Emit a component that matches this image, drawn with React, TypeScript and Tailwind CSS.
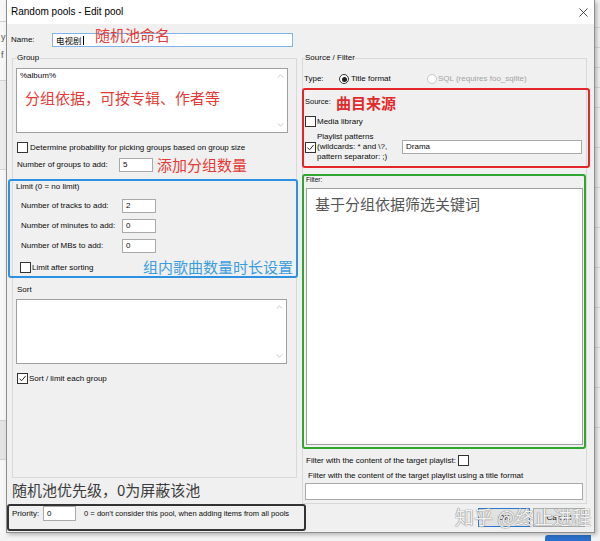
import React from 'react'

// small pieces of the Windows dialog

function Check({ checked = false }: { checked?: boolean }) {
  return (
    <span className="flex h-[11px] w-[11px] shrink-0 items-center justify-center border border-[#333] bg-white">
      {checked && (
        <svg viewBox="0 0 10 10" className="h-[9px] w-[9px]">
          <path d="M1.6 5.1 L4 7.5 L8.5 2.2" fill="none" stroke="#222" strokeWidth="1.1" />
        </svg>
      )}
    </span>
  )
}

function Radio({ on = false, disabled = false }: { on?: boolean; disabled?: boolean }) {
  return (
    <span
      className={
        disabled
          ? 'flex h-[10px] w-[10px] shrink-0 items-center justify-center rounded-full border border-[#c8c8c8] bg-white'
          : 'flex h-[10px] w-[10px] shrink-0 items-center justify-center rounded-full border border-[#333] bg-white'
      }
    >
      {on && <span className="h-[5px] w-[5px] rounded-full bg-[#222]" />}
    </span>
  )
}

function Box({ value = '', className = '' }: { value?: string; className?: string }) {
  return (
    <div className={`flex shrink-0 items-center border border-[#a9a9a9] bg-white px-[3px] ${className}`}>
      {value}
    </div>
  )
}

function Chevron({ up = false }: { up?: boolean }) {
  return (
    <svg viewBox="0 0 8 5" className="h-[4px] w-[7px]">
      <path d={up ? 'M0.5 4.5 L4 1 L7.5 4.5' : 'M0.5 0.5 L4 4 L7.5 0.5'} fill="none" stroke="#bdbdbd" strokeWidth="1" />
    </svg>
  )
}

function Memo({ text = '', className = '' }: { text?: string; className?: string }) {
  return (
    <div className={`flex shrink-0 border border-[#a0a0a0] bg-white ${className}`}>
      <div className="flex-1 px-[3px] pt-[2px]">{text}</div>
      <div className="flex w-[13px] flex-col items-center justify-between py-[5px]">
        <Chevron up />
        <Chevron />
      </div>
    </div>
  )
}

const note = "pointer-events-none absolute whitespace-nowrap font-['Noto_Sans_CJK_SC',sans-serif] text-[15px] leading-[20px]"

function LeftColumn() {
  return (
    <div className="flex w-[295px] flex-col">
      <div className="mt-[9px] flex h-[14px] items-center pl-[4px]">
        <span className="w-[41px]">Name:</span>
        <div className="flex h-[14px] w-[241px] items-center border border-[#7eb4ea] bg-white px-[3px] font-['Noto_Sans_CJK_SC',sans-serif] text-[8.5px]">
          电视剧<span className="ml-[1px] h-[9px] w-px bg-black" />
        </div>
      </div>

      <fieldset className="ml-[5px] mt-[6px] h-[425px] w-[285px] border border-[#d9d9d9]">
        <legend className="ml-[3px] px-[1px] leading-[10px]">Group</legend>
        <Memo text="%album%" className="ml-[3px] mt-[5px] h-[65px] w-[272px]" />

        <div className="ml-[4px] mt-[9px] flex h-[11px] items-center gap-[2px]">
          <Check />
          <span>Determine probability for picking groups based on group size</span>
        </div>

        <div className="ml-[4px] mt-[5px] flex h-[14px] items-center">
          <span className="w-[102px]">Number of groups to add:</span>
          <Box value="5" className="h-[14px] w-[34px]" />
        </div>

        <div className="ml-[3px] mt-[10px] h-[10px]">Limit (0 = no limit)</div>
        {[
          ['Number of tracks to add:', '2', 'mt-[7px]'],
          ['Number of minutes to add:', '0', 'mt-[6px]'],
          ['Number of MBs to add:', '0', 'mt-[6px]'],
        ].map(([label, value, gap]) => (
          <div key={label} className={`ml-[8px] flex h-[14px] items-center ${gap}`}>
            <span className="w-[101px]">{label}</span>
            <Box value={value} className="h-[14px] w-[34px]" />
          </div>
        ))}
        <div className="ml-[7px] mt-[9px] flex h-[11px] items-center gap-[1px]">
          <Check />
          <span>Limit after sorting</span>
        </div>

        <div className="ml-[4px] mt-[12px] h-[10px]">Sort</div>
        <Memo className="ml-[3px] mt-[4px] h-[65px] w-[271px]" />
        <div className="ml-[4px] mt-[9px] flex h-[11px] items-center gap-[1px]">
          <Check checked />
          <span>Sort / limit each group</span>
        </div>
      </fieldset>

      <div className="mt-[28px] flex h-[15px] items-center pl-[5px]">
        <span className="w-[31px]">Priority:</span>
        <Box value="0" className="h-[15px] w-[33px]" />
        <span className="ml-[8px] text-[7.6px]">0 = don't consider this pool, when adding items from all pools</span>
      </div>
    </div>
  )
}

function RightColumn() {
  return (
    <div className="flex w-[292px] flex-col">
      <fieldset className="mt-[29px] w-[285px] border border-[#d9d9d9] pb-[3px]">
        <legend className="ml-[2px] leading-[10px]">Source / Filter</legend>

        <div className="mt-[11px] flex h-[10px] items-center pl-[1px]">
          <span className="w-[35px]">Type:</span>
          <div className="flex w-[88px] items-center gap-[2px]">
            <Radio on />
            <span>Title format</span>
          </div>
          <div className="flex items-center gap-[1px] text-[#a3a3a3]">
            <Radio disabled />
            <span>SQL (requires foo_sqlite)</span>
          </div>
        </div>

        <div className="ml-[2px] mt-[13px] h-[10px] text-[7.5px]">Source:</div>
        <div className="ml-[2px] mt-[9px] flex h-[11px] items-center gap-[1px]">
          <Check />
          <span>Media library</span>
        </div>
        <div className="ml-[2px] mt-[5px] flex h-[30px] items-center">
          <Check checked />
          <span className="w-[86px] pl-[1px] leading-[10px]">
            Playlist patterns
            <br />
            (wildcards: * and \?,
            <br />
            pattern separator: ;)
          </span>
          <Box value="Drama" className="h-[14px] w-[180px]" />
        </div>

        <div className="ml-[3px] mt-[14px] h-[8px] text-[6.5px] leading-[8px]">Filter:</div>
        <div className="ml-[3px] mt-[4px] h-[257px] w-[277px] border border-[#a0a0a0] bg-white" />

        <div className="ml-[3px] mt-[10px] flex h-[11px] items-center gap-[2px]">
          <span>Filter with the content of the target playlist:</span>
          <Check />
        </div>
        <div className="ml-[5px] mt-[5px] h-[10px]">Filter with the content of the target playlist using a title format</div>
        <Box className="ml-[2px] mt-[2px] h-[17px] w-[278px]" />
      </fieldset>

      <div className="mt-[4px] flex justify-end gap-[3px] pr-[9px]">
        <button className="flex h-[19px] w-[52px] items-center justify-center border border-[#2a78d0] bg-[#e1e1e1] text-[8px]">
          OK
        </button>
        <button className="flex h-[19px] w-[52px] items-center justify-center border border-[#adadad] bg-[#e1e1e1] text-[8px]">
          Cancel
        </button>
      </div>
    </div>
  )
}

function Dialog() {
  return (
    <div className="relative flex h-[533px] w-[589px] shrink-0 flex-col border-x border-b border-[#8f8f8f] bg-[#f0f0f0] text-[8px] leading-[10px] text-[#0a0a0a] shadow-[2px_2px_4px_rgba(0,0,0,0.25)]">
      <div className="flex h-[24px] shrink-0 items-center justify-between bg-white pl-[4px] pr-[6px] text-[10px] text-black">
        <span>Random pools - Edit pool</span>
        <svg viewBox="0 0 10 10" className="h-[9px] w-[9px]">
          <path d="M0.5 0.5 L9.5 9.5 M9.5 0.5 L0.5 9.5" stroke="#222" strokeWidth="0.9" />
        </svg>
      </div>

      <div className="flex flex-1">
        <LeftColumn />
        <RightColumn />
      </div>

      {/* hand-drawn annotations on top of the screenshot */}
      <div className="pointer-events-none absolute left-[1px] top-[179px] h-[99px] w-[290px] rounded-[3px] border-2 border-[#2e90e0]" />
      <div className="pointer-events-none absolute left-0 top-[504px] h-[27px] w-[299px] rounded-[3px] border-2 border-[#333]" />
      <div className="pointer-events-none absolute left-[295px] top-[88px] h-[80px] w-[288px] rounded-[3px] border-2 border-[#e3262b]" />
      <div className="pointer-events-none absolute left-[295px] top-[174px] h-[275px] w-[284px] rounded-[3px] border-2 border-[#2fa62f]" />

      <span className={`${note} left-[88px] top-[25px] text-[#e53a35]`}>随机池命名</span>
      <span className={`${note} left-[18px] top-[88px] text-[#e53a35]`}>分组依据，可按专辑、作者等</span>
      <span className={`${note} left-[150px] top-[155px] text-[#e53a35]`}>添加分组数量</span>
      <span className={`${note} left-[136px] top-[257px] text-[#3a9de0]`}>组内歌曲数量时长设置</span>
      <span className={`${note} left-[5px] top-[480px] text-[#3c3c3c]`}>随机池优先级，0为屏蔽该池</span>
      <span className={`${note} left-[329px] top-[93px] font-bold text-[#e02a2a]`}>曲目来源</span>
      <span className={`${note} left-[308px] top-[194px] text-[#555]`}>基于分组依据筛选关键词</span>
      <span className={`${note} left-[448px] top-[507px] text-[19px] text-white/90 [text-shadow:0_0_1px_#777,0_0_1px_#777]`}>
        知乎 @终止进程
      </span>
    </div>
  )
}

function LeftStrip() {
  return (
    <div className="flex w-[6px] shrink-0 flex-col overflow-hidden bg-[#f7f7f7] text-[9px] leading-[10px] text-[#555]">
      <div className="h-[22px] border-b border-[#d0d0d0]" />
      <div className="mt-[10px] pl-[1px]">y</div>
      <div className="mt-[8px] pl-[1px]">f</div>
      <div className="mt-[20px] h-[90px] border-y border-[#d4d4d4] bg-[#ececec]" />
      <div className="mt-[250px] h-[40px] border-y border-[#cfcfcf] bg-[#e4e4e4]" />
    </div>
  )
}

function RightStrip() {
  return (
    <div className="flex flex-1 flex-col bg-[#f2f2f2]">
      {[28, 20, 20, 20, 20, 40, 40, 40, 40, 40, 40, 40, 40].map((h, i) => (
        <div key={i} style={{ height: h }} className="border-b border-[#dadada]" />
      ))}
    </div>
  )
}

export default function App() {
  return (
    <div className="flex h-[541px] w-[600px] flex-col overflow-hidden bg-[#eef0f2] font-['Liberation_Sans',Arial,sans-serif]">
      <div className="flex h-[533px] shrink-0">
        <LeftStrip />
        <Dialog />
        <RightStrip />
      </div>
      <div className="flex flex-1 bg-[#f4f4f4]">
        <div className="ml-[545px] mt-[2px] w-[46px] rounded-tl-[3px] bg-[#2a6fc9]" />
      </div>
    </div>
  )
}
